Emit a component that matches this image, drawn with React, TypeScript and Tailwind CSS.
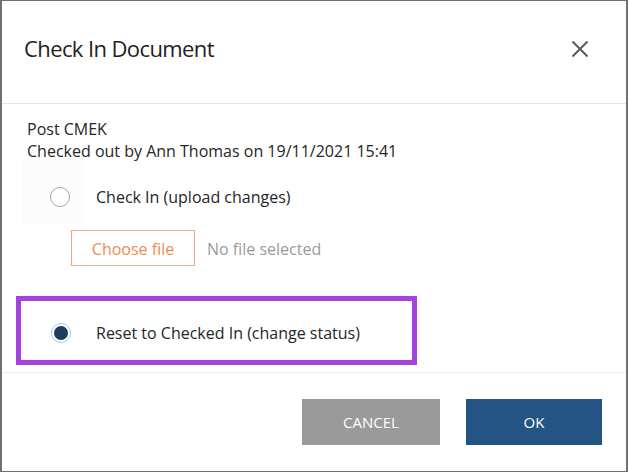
import React from "react";

function CloseIcon() {
  return (
    <svg width="18" height="18" viewBox="0 0 18 18" fill="none">
      <path d="M1.5 1.5L16.5 16.5M16.5 1.5L1.5 16.5" stroke="#5c5c5c" strokeWidth="2" />
    </svg>
  );
}

function Radio({ checked }: { checked?: boolean }) {
  if (checked) {
    return (
      <span className="flex h-[20px] w-[20px] items-center justify-center rounded-full border border-[#a9c9ee] bg-white">
        <span className="h-[14px] w-[14px] rounded-full bg-[#1c3c62]" />
      </span>
    );
  }
  return <span className="block h-[20px] w-[20px] rounded-full border border-[#a6a6a6] bg-white" />;
}

export default function App() {
  return (
    <div
      className="flex h-[472px] w-[628px] flex-col border border-x-2 border-[#707070] bg-white text-[#262626]"
      style={{ fontFamily: '"Open Sans", "Noto Sans", sans-serif' }}
    >
      <div className="flex h-[103px] shrink-0 items-center justify-between border-b border-[#e6e6e6] pb-[7px] pl-[22px] pr-[37px]">
        <h1 className="text-[22px] font-normal tracking-[-0.6px] text-[#222]">Check In Document</h1>
        <button type="button" className="flex items-center">
          <CloseIcon />
        </button>
      </div>

      <div className="flex flex-1 flex-col px-[14px] pt-[14px] text-[16px] leading-[22px]">
        <div className="pl-[11px]">Post CMEK</div>
        <div className="pl-[11px]">Checked out by Ann Thomas on 19/11/2021 15:41</div>

        <div className="mt-[13px] flex h-[44px] items-center">
          <div className="mb-[12px] ml-[6px] mr-[13px] flex h-[63px] w-[61px] items-center justify-center bg-[#fcfcfc] pl-[15px] pt-[12px]">
            <Radio />
          </div>
          <span>Check In (upload changes)</span>
        </div>

        <div className="mt-[11px] ml-[55px] flex items-center gap-[12px]">
          <button
            type="button"
            className="h-[36px] w-[124px] border border-[#f2a77a] pt-[1px] text-[16px] text-[#ee8a50]"
          >
            Choose file
          </button>
          <span className="pt-[1px] text-[#9a9a9a]">No file selected</span>
        </div>

        <div className="mt-[30px] flex h-[69px] w-[401px] items-center border-[5px] border-[#a344dc] pt-[5px]">
          <div className="ml-[30px] flex w-[45px] items-center">
            <Radio checked />
          </div>
          <span>Reset to Checked In (change status)</span>
        </div>
      </div>

      <div className="flex h-[99px] shrink-0 justify-end gap-[26px] border-t border-[#ececec] pr-[24px] pt-[26px]">
        <button type="button" className="h-[46px] w-[138px] bg-[#9a9a9a] text-[15px] text-white">
          CANCEL
        </button>
        <button type="button" className="h-[46px] w-[136px] bg-[#245483] text-[15px] text-white">
          OK
        </button>
      </div>
    </div>
  );
}
